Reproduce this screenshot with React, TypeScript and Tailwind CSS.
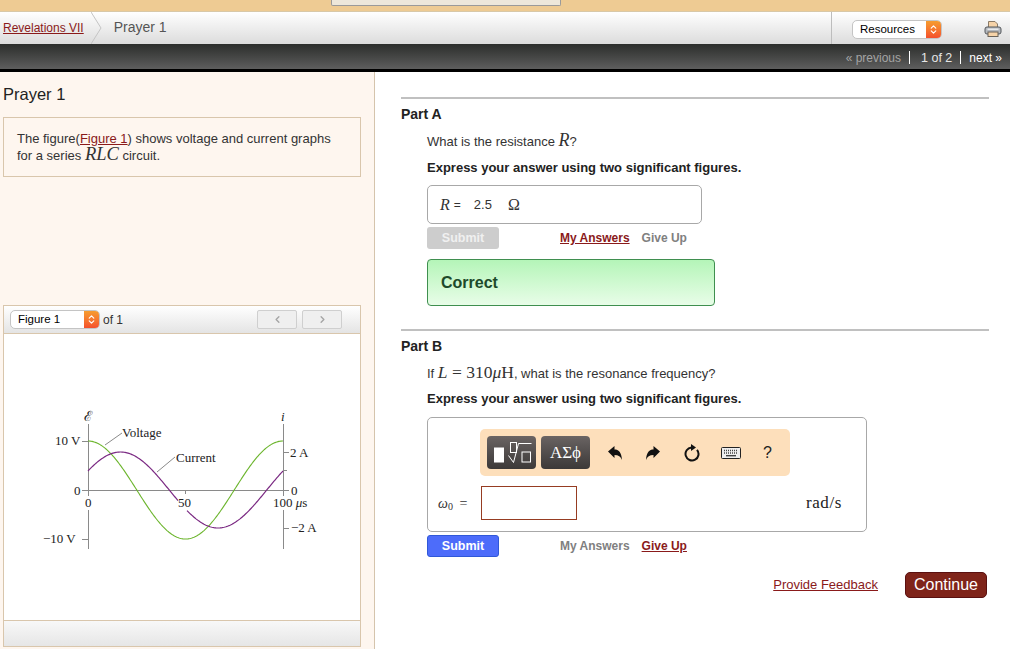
import { ChevronLeft, ChevronRight, ChevronsUpDown } from 'lucide-react';

const SANS = "font-['Liberation_Sans',Arial,sans-serif]";
const SERIF = "font-['Liberation_Serif',serif]";

// sampled curves for the figure, in svg px (left axis x=58, right x=253, zero y=90)
function curve(amp: number, shift: number, from: number, to: number) {
  const pts: string[] = [];
  for (let x = from; x <= to; x += 1) {
    const y = 90 - amp * Math.cos((2 * Math.PI * (x - shift)) / 195);
    pts.push(`${x},${y.toFixed(2)}`);
  }
  return pts.join(' ');
}

function Select({ label, width }: { label: string; width: string }) {
  return (
    <div className={`flex h-[19px] ${width} items-center justify-between overflow-hidden rounded-[5px] border border-[#c4c4c4] bg-white pl-[7px] text-[11.5px] text-black`}>
      <span className="pt-[1px]">{label}</span>
      <span className="flex h-[19px] w-[15px] items-center justify-center bg-gradient-to-b from-[#f5a030] to-[#f4492c] text-white">
        <ChevronsUpDown className="h-[11px] w-[11px]" strokeWidth={2.5} />
      </span>
    </div>
  );
}

function Printer() {
  return (
    <svg width="18" height="18" viewBox="0 0 18 18" className="block">
      <path d="M4.500 8V1.500h6.500l2.500 2.500V8z" fill="#f6d3a8" stroke="#8a7a66" strokeWidth="1" />
      <rect x="1" y="7" width="16" height="7" rx="2" fill="#b4b8be" stroke="#55585c" strokeWidth="1" />
      <rect x="3.500" y="8.500" width="11" height="1.500" fill="#e8eaec" />
      <rect x="4" y="12" width="10" height="4.500" fill="#f6d3a8" stroke="#6a6258" strokeWidth="1" />
    </svg>
  );
}

function Chart() {
  const text = { fontFamily: "'Liberation Serif', serif", fontSize: 13, fill: '#222' };
  return (
    <svg width="330" height="160" viewBox="0 0 330 160" className="block">
      <g stroke="#8a8a8a" strokeWidth="1" fill="none">
        <path d="M58.500 24V96M58.500 110V149" />
        <path d="M253.500 24V96M253.500 110V149" />
        <path d="M52 90.500H259" />
        <path d="M155.500 90V94M52 41.500H58M52 139.500H58M253 52.500H259M253 128.500H259M253 70.500H257" />
        <path d="M75 45L92 33M127 72L145 57" />
      </g>
      <polyline points={curve(49, 58, 58, 253)} fill="none" stroke="#6cb52d" strokeWidth="1.100" />
      <polyline points={curve(38, 90.5, 58, 148)} fill="none" stroke="#7b2a83" strokeWidth="1.200" />
      <polyline points={curve(38, 90.5, 157, 253)} fill="none" stroke="#7b2a83" strokeWidth="1.200" />
      <g style={text}>
        <text x="54" y="21" fontSize="14" fontFamily="'DejaVu Serif', serif">ℰ</text>
        <text x="251" y="21" fontStyle="italic">i</text>
        <text x="25" y="45">10 V</text>
        <text x="92" y="37">Voltage</text>
        <text x="146" y="62">Current</text>
        <text x="260" y="57">2 A</text>
        <text x="44" y="95">0</text>
        <text x="55" y="107">0</text>
        <text x="148" y="107">50</text>
        <text x="261" y="95">0</text>
        <text x="243" y="107">100 <tspan fontStyle="italic">μ</tspan>s</text>
        <text x="261" y="132">−2 A</text>
        <text x="13" y="143">−10 V</text>
      </g>
    </svg>
  );
}

function KeyboardIcon() {
  return (
    <svg width="20" height="12" viewBox="0 0 20 12" className="block">
      <rect x="0.500" y="0.500" width="19" height="11" rx="1" fill="#eee" stroke="#222" />
      <path d="M3 3.500h14M3 6h14" stroke="#444" strokeWidth="1.400" strokeDasharray="1 1" />
      <path d="M5 8.700h10" stroke="#444" strokeWidth="1.400" />
    </svg>
  );
}

function Toolbar() {
  return (
    <div className="flex h-[47px] w-[310px] items-center rounded-[5px] bg-[#fddfbb] pl-[7px]">
      <div className="flex h-[33px] w-[49px] items-center justify-center rounded-[4px] bg-gradient-to-b from-[#6a6463] to-[#3c3938]">
        <svg width="40" height="28" viewBox="0 0 40 28">
          <rect x="2" y="8.500" width="10" height="15" fill="#fff" />
          <rect x="18.500" y="3.500" width="6" height="10" fill="none" stroke="#fff" />
          <path d="M16.500 16.500l5 7 5-19h13" fill="none" stroke="#fff" strokeWidth="1" />
          <rect x="30" y="13" width="8.500" height="10" fill="none" stroke="#fff" />
        </svg>
      </div>
      <div className={`ml-[5px] flex h-[33px] w-[49px] items-center justify-center rounded-[4px] bg-gradient-to-b from-[#6a6463] to-[#3c3938] text-[17px] text-white ${SERIF}`}>
        ΑΣϕ
      </div>
      <svg className="ml-[17px]" width="16" height="16" viewBox="0 0 16 16">
        <path d="M1 6.500L7.500 1v3.400c4 0 7 2.400 7.500 10.600-1.300-3.500-3.500-5-7.500-5V13z" fill="#111" />
      </svg>
      <svg className="ml-[22px]" width="16" height="16" viewBox="0 0 16 16">
        <path d="M15 6.500L8.500 1v3.400c-4 0-7 2.400-7.500 10.600 1.300-3.500 3.500-5 7.500-5V13z" fill="#111" />
      </svg>
      <svg className="ml-[22px]" width="18" height="18" viewBox="0 0 18 18">
        <path d="M14 5.800A6.500 6.500 0 1 1 8.500 3.500" fill="none" stroke="#111" strokeWidth="2" />
        <path d="M8 0l5 3.500-5 3.500z" fill="#111" />
      </svg>
      <div className="ml-[20px]"><KeyboardIcon /></div>
      <span className="ml-[22px] text-[16px] text-[#222]">?</span>
    </div>
  );
}

function PartHeading({ title }: { title: string }) {
  return (
    <div className="border-t-2 border-[#c0c0c0] pt-[7px]">
      <h2 className="text-[14px] font-bold leading-[16px] text-[#222]">{title}</h2>
    </div>
  );
}

export default function App() {
  return (
    <div className={`flex h-[649px] w-[1010px] flex-col overflow-hidden bg-white text-[13px] text-[#333] ${SANS}`}>
      {/* browser strip left over at the top */}
      <div className="h-[12px] shrink-0 border-b border-[#d8c8a8] bg-[#eecb93]">
        <div className="ml-[331px] h-[6px] w-[230px] rounded-b-[2px] border border-t-0 border-[#9a9a9a] bg-[#ede7da]" />
      </div>

      <div className="flex h-[32px] shrink-0 items-center bg-gradient-to-b from-white to-[#dcdcdc]">
        <a className="mb-[1px] ml-[3px] text-[12px] text-[#8a1a1a] underline">Revelations VII</a>
        <svg className="ml-[7px]" width="12" height="32" viewBox="0 0 12 32">
          <path d="M0 0L10 16L0 32" fill="none" stroke="#c4c4c4" />
        </svg>
        <span className="mb-[1px] ml-[11px] text-[14px] text-[#555]">Prayer 1</span>
        <div className="ml-auto flex h-full w-[179px] items-center border-l border-[#bdbdbd] pl-[20px] pt-[2px]">
          <Select label="Resources" width="w-[90px]" />
          <div className="ml-[42px]"><Printer /></div>
        </div>
      </div>

      <div className="flex h-[28px] shrink-0 items-center justify-end border-b-[3px] border-black bg-gradient-to-b from-[#2c2e2c] to-[#5e5e5e] pr-[8px] pt-[2px] text-[12px] leading-[14px] text-white">
        <span className="text-[#a4a4a4]">« previous</span>
        <span className="ml-[8px] h-[13px] w-px bg-white" />
        <span className="ml-[11px] text-[12.500px] leading-[14px] text-[#e6e6e6]">1 of 2</span>
        <span className="ml-[8px] h-[13px] w-px bg-white" />
        <span className="ml-[8px]">next »</span>
      </div>

      <div className="flex min-h-0 flex-1">
        <aside className="flex w-[375px] shrink-0 flex-col border-r border-[#d5c4ac] bg-[#fef6ef] pl-[3px] pr-[13px] pt-[12px]">
          <h1 className="text-[16.500px] leading-[20px] text-[#222]">Prayer 1</h1>
          <div className="mt-[13px] h-[60px] border border-[#d9c6ac] px-[13px] pt-[13px] leading-[16px] text-[#333]">
            The figure(<a className="text-[#8a1a1a] underline">Figure 1</a>) shows voltage and current graphs
            <br />
            for a series <span className={`${SERIF} text-[18.500px] italic leading-[14px]`}>RLC</span> circuit.
          </div>
          <div className="mt-[128px] flex h-[342px] flex-col border border-[#d9c6ac] bg-white">
            <div className="flex h-[28px] shrink-0 items-center border-b border-[#d9c6ac] bg-gradient-to-b from-white to-[#e4e4e4] pl-[6px]">
              <Select label="Figure 1" width="w-[90px]" />
              <span className="ml-[3px] text-[12px] text-[#333]">of 1</span>
              <div className="ml-auto mr-[18px] flex gap-[5px]">
                {[ChevronLeft, ChevronRight].map((Icon, i) => (
                  <span key={i} className="flex h-[19px] w-[40px] items-center justify-center rounded-[2px] border border-[#cfcfcf] bg-[#efefef] text-[#a5a5a5]">
                    <Icon className="h-[11px] w-[11px]" strokeWidth={3} />
                  </span>
                ))}
              </div>
            </div>
            <div className="min-h-0 flex-1 pl-[26px] pt-[66px]">
              <Chart />
            </div>
            <div className="h-[26px] shrink-0 border-t border-[#d9c6ac] bg-gradient-to-b from-[#f8f8f8] to-[#e6e6e6]" />
          </div>
        </aside>

        <main className="flex-1 pl-[26px] pr-[21px] pt-[25px]">
          <PartHeading title="Part A" />
          <div className="pl-[26px]">
            <p className="mt-[11px] leading-[16px]">
              What is the resistance <span className={`${SERIF} text-[18px] italic leading-[14px]`}>R</span>?
            </p>
            <p className="mt-[10px] font-bold leading-[16px] text-[#222]">Express your answer using two significant figures.</p>
            <div className="mt-[9px] flex h-[39px] w-[275px] items-center rounded-[5px] border border-[#a8a8a8] pl-[12px]">
              <span className={`${SERIF} text-[16px] italic`}>R</span>
              <span className="ml-[4px] text-[12px]">=</span>
              <span className="ml-[13px] text-[13px]">2.5</span>
              <span className={`${SERIF} ml-[16px] text-[16px]`}>Ω</span>
            </div>
            <div className="mt-[3px] flex h-[22px] items-center text-[12px]">
              <span className="flex h-[22px] w-[72px] items-center justify-center rounded-[3px] bg-[#cdcdcd] text-[12.500px] font-bold text-[#f0f0f0]">Submit</span>
              <a className="ml-[61px] font-bold text-[#8a1a1a] underline">My Answers</a>
              <span className="ml-[12px] font-bold text-[#808080]">Give Up</span>
            </div>
            <div className="mt-[10px] flex h-[47px] w-[288px] items-center rounded-[4px] border border-[#3f8f4f] bg-gradient-to-b from-[#b4f5b8] to-[#e8fde8] pl-[13px] text-[16px] font-bold text-[#1d4a2a]">
              Correct
            </div>
          </div>

          <div className="mt-[23px]"><PartHeading title="Part B" /></div>
          <div className="pl-[26px]">
            <p className="mt-[11px] leading-[16px]">
              If <span className={`${SERIF} text-[17.500px] leading-[14px]`}><i>L</i> = 310<i>μ</i>H</span>, what is the resonance frequency?
            </p>
            <p className="mt-[9px] font-bold leading-[16px] text-[#222]">Express your answer using two significant figures.</p>
            <div className="mt-[10px] h-[115px] w-[440px] rounded-[5px] border border-[#a8a8a8] pt-[11px]">
              <div className="pl-[52px]"><Toolbar /></div>
              <div className="mt-[10px] flex items-center pl-[10px]">
                <span className={`${SERIF} w-[43px] text-[14px]`}>
                  <i>ω</i><sub className="text-[10px]">0</sub> <span className="ml-[3px]">=</span>
                </span>
                <span className="h-[34px] w-[96px] border border-[#963c22] bg-white" />
                <span className={`${SERIF} ml-auto mr-[24px] text-[17px] tracking-[0.6px] text-[#222]`}>rad/s</span>
              </div>
            </div>
            <div className="mt-[3px] flex h-[22px] items-center text-[12px]">
              <span className="flex h-[22px] w-[72px] items-center justify-center rounded-[3px] border border-[#3058d8] bg-[#4d6cfa] text-[12.500px] font-bold text-white">Submit</span>
              <span className="ml-[61px] font-bold text-[#808080]">My Answers</span>
              <a className="ml-[12px] font-bold text-[#8a1a1a] underline">Give Up</a>
            </div>
          </div>
          <div className="mt-[15px] flex items-center justify-end pr-[2px]">
            <a className="text-[#8a1a1a] underline">Provide Feedback</a>
            <span className="ml-[27px] flex h-[26px] w-[82px] items-center justify-center rounded-[5px] border border-[#5a1010] bg-[#7f241a] text-[16px] text-white">Continue</span>
          </div>
        </main>
      </div>
    </div>
  );
}
